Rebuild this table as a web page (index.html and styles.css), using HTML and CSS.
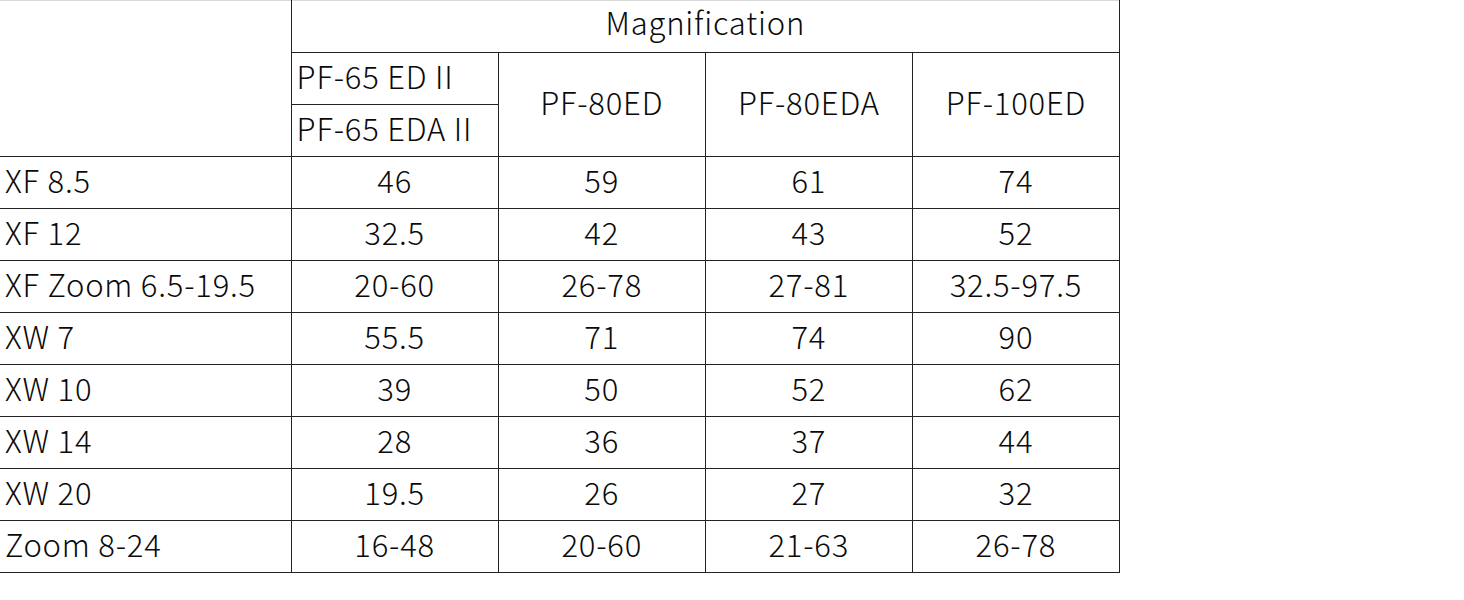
FILE: index.html
```html
<!DOCTYPE html>
<html>
<head>
<meta charset="utf-8">
<link rel="stylesheet" href="styles.css">
</head>
<body>
<table class="mag">
  <colgroup>
    <col class="c-name">
    <col class="c-val">
    <col class="c-val">
    <col class="c-val">
    <col class="c-val">
  </colgroup>
  <tr>
    <td class="corner" rowspan="3"></td>
    <td class="title" colspan="4">Magnification</td>
  </tr>
  <tr>
    <td class="left">PF-65 ED II</td>
    <td rowspan="2">PF-80ED</td>
    <td rowspan="2">PF-80EDA</td>
    <td rowspan="2">PF-100ED</td>
  </tr>
  <tr>
    <td class="left">PF-65 EDA II</td>
  </tr>
  <tr><td class="name">XF 8.5</td><td>46</td><td>59</td><td>61</td><td>74</td></tr>
  <tr><td class="name">XF 12</td><td>32.5</td><td>42</td><td>43</td><td>52</td></tr>
  <tr><td class="name">XF Zoom 6.5-19.5</td><td>20-60</td><td>26-78</td><td>27-81</td><td>32.5-97.5</td></tr>
  <tr><td class="name">XW 7</td><td>55.5</td><td>71</td><td>74</td><td>90</td></tr>
  <tr><td class="name">XW 10</td><td>39</td><td>50</td><td>52</td><td>62</td></tr>
  <tr><td class="name">XW 14</td><td>28</td><td>36</td><td>37</td><td>44</td></tr>
  <tr><td class="name">XW 20</td><td>19.5</td><td>26</td><td>27</td><td>32</td></tr>
  <tr><td class="name">Zoom 8-24</td><td>16-48</td><td>20-60</td><td>21-63</td><td>26-78</td></tr>
</table>
</body>
</html>
```

FILE: styles.css
```css
html, body {
  margin: 0;
  padding: 0;
  background: #ffffff;
}

.mag {
  border-collapse: collapse;
  table-layout: fixed;
  width: 1120px;
  font-family: "Noto Sans CJK JP", "Noto Sans", sans-serif;
  font-weight: 300;
  font-size: 31px;
  letter-spacing: 0.8px;
  color: #0a0a0a;
  border-top: 1px solid #d8d8d8;
}

.c-name { width: 291px; }
.c-val { width: 207px; }

.mag td {
  height: 44px;
  padding: 0 0 7px 0;
  border: 1px solid #222222;
  text-align: center;
  vertical-align: middle;
  line-height: 1;
  white-space: nowrap;
}

.mag td.corner {
  border-top: none;
  border-left: none;
}

.mag td.title {
  height: 40px;
  padding-bottom: 11px;
  border-top: 1px solid #d8d8d8;
}

.mag td.left {
  text-align: left;
  padding-left: 5px;
}

.mag td.name {
  text-align: left;
  padding-left: 5px;
  border-left: none;
}
```
